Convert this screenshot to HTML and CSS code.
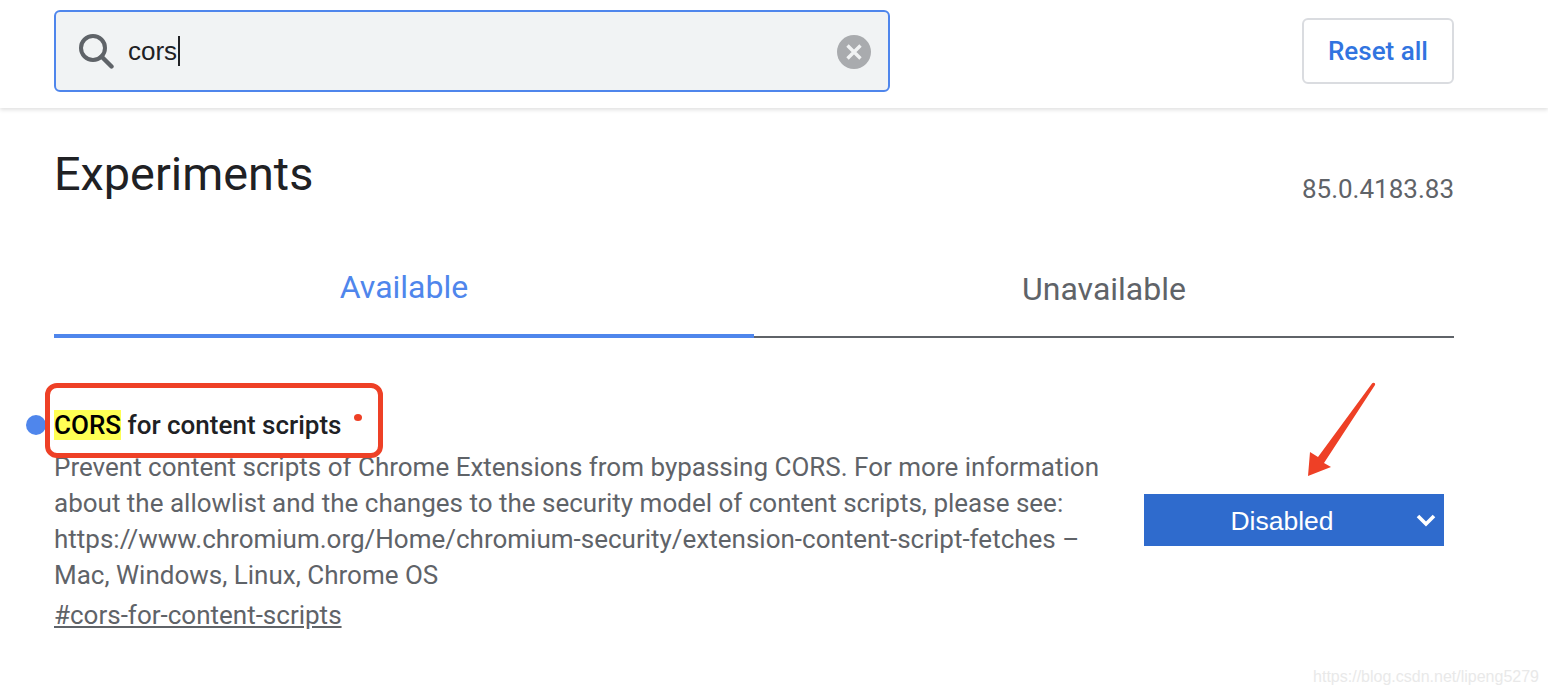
FILE: index.html
```html
<!DOCTYPE html>
<html lang="en">
<head>
    <meta charset="UTF-8">
    <meta name="viewport" content="width=device-width, initial-scale=1.0">
    <title>Experiments</title>
    <link rel="stylesheet" href="styles.css">
</head>
<body>
    <header class="search-header">
        <div class="search-box">
            <svg class="search-icon" width="36" height="36" viewBox="0 0 36 36">
                <circle cx="15" cy="15" r="12" fill="none" stroke="#5f6368" stroke-width="4"/>
                <path d="M23.5 23.5L33.5 33.5" fill="none" stroke="#5f6368" stroke-width="4.4" stroke-linecap="round"/>
            </svg>
            <span class="search-text">cors</span><span class="caret"></span>
            <svg class="clear-icon" width="34" height="34" viewBox="0 0 34 34">
                <circle cx="17" cy="17" r="17" fill="#a9abae"/>
                <path d="M10.5 10.5L23.5 23.5M23.5 10.5L10.5 23.5" stroke="#f1f3f4" stroke-width="3.4"/>
            </svg>
        </div>
        <button class="reset-btn">Reset all</button>
    </header>

    <main class="content">
        <div class="title-row">
            <h1>Experiments</h1>
            <span class="version">85.0.4183.83</span>
        </div>

        <div class="tabs">
            <div class="tab tab-active">Available</div>
            <div class="tab">Unavailable</div>
        </div>

        <section class="experiment">
            <div class="experiment-text">
                <h2 class="experiment-name"><span class="blue-dot"></span><mark>CORS</mark> for content scripts</h2>
                <p class="description">Prevent content scripts of Chrome Extensions from bypassing CORS. For more information about the allowlist and the changes to the security model of content scripts, please see: https://www.chromium.org/Home/chromium-security/extension-content-script-fetches &ndash; Mac, Windows, Linux, Chrome OS</p>
                <a class="permalink" href="#cors-for-content-scripts">#cors-for-content-scripts</a>
            </div>
            <div class="select-wrap">
                <div class="select-box">
                    <span class="select-label">Disabled</span>
                    <svg class="chevron" width="20" height="14" viewBox="0 0 20 14">
                        <path d="M2 3L10 11L18 3" fill="none" stroke="#fff" stroke-width="3.6"/>
                    </svg>
                </div>
            </div>
        </section>
    </main>

    <!-- annotations drawn on top of the screenshot -->
    <div class="note-box"></div>
    <div class="note-dot"></div>
    <svg class="note-arrow" width="80" height="100" viewBox="0 0 80 100">
        <path d="M72 3.5C73 2 76 3 75 5L24 83L31 87L8 96L10 72L18 77Z" fill="#ee4026"/>
    </svg>
    <div class="watermark">https://blog.csdn.net/lipeng5279</div>
</body>
</html>
```

FILE: styles.css
```css
* {
    margin: 0;
    padding: 0;
    box-sizing: border-box;
}

body {
    font-family: 'Roboto', sans-serif;
    background: #fff;
    color: #5f6368;
    height: 696px;
    overflow: hidden;
    position: relative;
}

.search-header {
    height: 108px;
    padding: 10px 94px 0 54px;
    display: flex;
    justify-content: space-between;
    align-items: flex-start;
    box-shadow: 0 2px 4px rgba(0, 0, 0, 0.12);
}

.search-box {
    width: 836px;
    height: 82px;
    background: #f1f3f4;
    border: 2px solid #4f86ec;
    border-radius: 6px;
    display: flex;
    align-items: center;
    padding: 0 17px 0 22px;
}

.search-icon {
    flex: none;
    margin-top: -1px;
}

.search-text {
    margin-left: 14px;
    font-family: 'Liberation Sans', sans-serif;
    font-size: 26px;
    color: #202124;
}

.caret {
    width: 2px;
    height: 30px;
    margin-left: 1px;
    background: #202124;
}

.clear-icon {
    margin-left: auto;
    margin-top: 2px;
}

.reset-btn {
    width: 152px;
    height: 66px;
    margin-top: 8px;
    background: #fff;
    border: 2px solid #dadce0;
    border-radius: 6px;
    color: #3174e0;
    font-family: 'Roboto', sans-serif;
    font-size: 26px;
    font-weight: 500;
}

.content {
    padding: 0 94px 0 54px;
}

.title-row {
    display: flex;
    justify-content: space-between;
    align-items: flex-end;
    height: 99px;
}

h1 {
    font-size: 46.8px;
    font-weight: 400;
    color: #202124;
    line-height: 54px;
    margin-bottom: 6px;
}

.version {
    font-size: 26px;
    line-height: 30px;
    margin-bottom: 3px;
}

.tabs {
    display: flex;
    height: 131px;
}

.tab {
    width: 700px;
    height: 131px;
    border-bottom: 2px solid #5f6368;
    font-size: 32px;
    text-align: center;
    padding-top: 63px;
}

.tab-active {
    color: #4f86ec;
    border-bottom: 4px solid #4f86ec;
    padding-top: 61px;
}

.experiment {
    display: flex;
    justify-content: space-between;
    margin-top: 69px;
}

.experiment-text {
    width: 1060px;
}

.experiment-name {
    position: relative;
    font-size: 26px;
    font-weight: 500;
    line-height: 36px;
    color: #202124;
}

.experiment-name mark {
    background: #ffff54;
    color: #000;
}

.blue-dot {
    position: absolute;
    left: -28px;
    top: 8px;
    width: 20px;
    height: 20px;
    border-radius: 50%;
    background: #4f86ec;
}

.description {
    font-size: 26px;
    line-height: 36px;
    margin-top: 6px;
}

.permalink {
    display: block;
    font-size: 26px;
    line-height: 36px;
    margin-top: 4px;
    color: #5f6368;
}

.select-wrap {
    width: 310px;
    padding-top: 87px;
}

.select-box {
    width: 300px;
    height: 52px;
    padding-right: 24px;
    background: #2f6bcd;
    color: #fff;
    font-family: 'Liberation Sans', sans-serif;
    font-size: 26.5px;
    display: flex;
    align-items: center;
    justify-content: center;
    position: relative;
}

.select-label {
    margin-top: 2px;
}

.chevron {
    position: absolute;
    right: 8px;
    top: 19px;
}

.note-box {
    position: absolute;
    left: 45px;
    top: 383px;
    width: 338px;
    height: 75px;
    border: 5px solid #ee4026;
    border-radius: 12px;
}

.note-dot {
    position: absolute;
    left: 354px;
    top: 414px;
    width: 8px;
    height: 7px;
    border-radius: 50%;
    background: #ee4026;
}

.note-arrow {
    position: absolute;
    left: 1300px;
    top: 380px;
}

.watermark {
    position: absolute;
    right: 9px;
    top: 668px;
    font-family: 'Liberation Sans', sans-serif;
    font-size: 16px;
    color: #e9e9e9;
}
```
